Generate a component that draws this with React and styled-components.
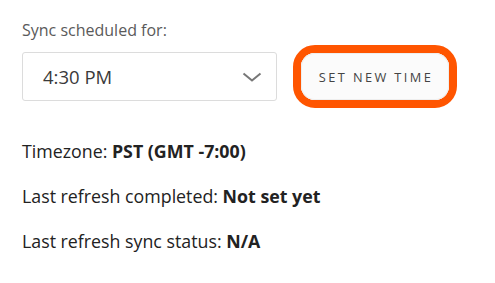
import styled, { createGlobalStyle } from "styled-components"

const GlobalStyle = createGlobalStyle`
    body {
        margin: 0;
        background: #fff;
        font-family: "Open Sans", "Noto Sans", sans-serif;
    }
`
const Container = styled.div`
    padding: 20px 22px;
    width: 495px;
    height: 283px;
    box-sizing: border-box;
`
const Label = styled.div`
    font-size: 16px;
    color: #5a5a5a;
    line-height: 20px;
    margin-bottom: 5px;
`
const Row = styled.div`
    display: flex;
    align-items: center;
    gap: 16px;
`
const Select = styled.div`
    width: 255px;
    height: 49px;
    box-sizing: border-box;
    border: 1px solid #dcdcdc;
    border-radius: 3px;
    display: flex;
    align-items: center;
    justify-content: space-between;
    padding: 0 14px 0 20px;
    font-size: 18.5px;
    color: #3a3a3a;
`
const Ring = styled.div`
    border: 8px solid #ff5500;
    border-radius: 22px;
`
const Button = styled.button`
    width: 148px;
    height: 47px;
    border: none;
    border-radius: 14px;
    background: #fbfbfb;
    box-shadow: inset 0 0 0 1px #eee;
    font-family: inherit;
    font-size: 12.8px;
    letter-spacing: 2.4px;
    color: #444;
    cursor: pointer;
    padding: 0 0 0 2px;
`
const Info = styled.div`
    margin-top: 31px;
    display: flex;
    flex-direction: column;
    gap: 21px;
`
const Line = styled.div`
    font-size: 17.8px;
    line-height: 24px;
    color: #222;
    b {
        font-weight: 700;
    }
`

const Chevron = () => (
    <svg width="20" height="10" viewBox="0 0 20 10" fill="none">
        <path d="M1.5 1.5 L10 8.5 L18.5 1.5" stroke="#777" strokeWidth="2" />
    </svg>
)

const App = () => {
  return (
    <Container>
        <GlobalStyle/>
        <Label>Sync scheduled for:</Label>
        <Row>
            <Select>
                <span>4:30 PM</span>
                <Chevron/>
            </Select>
            <Ring>
                <Button>SET NEW TIME</Button>
            </Ring>
        </Row>
        <Info>
            <Line>Timezone: <b>PST (GMT -7:00)</b></Line>
            <Line>Last refresh completed: <b>Not set yet</b></Line>
            <Line>Last refresh sync status: <b>N/A</b></Line>
        </Info>
    </Container>
  )
}

export default App
